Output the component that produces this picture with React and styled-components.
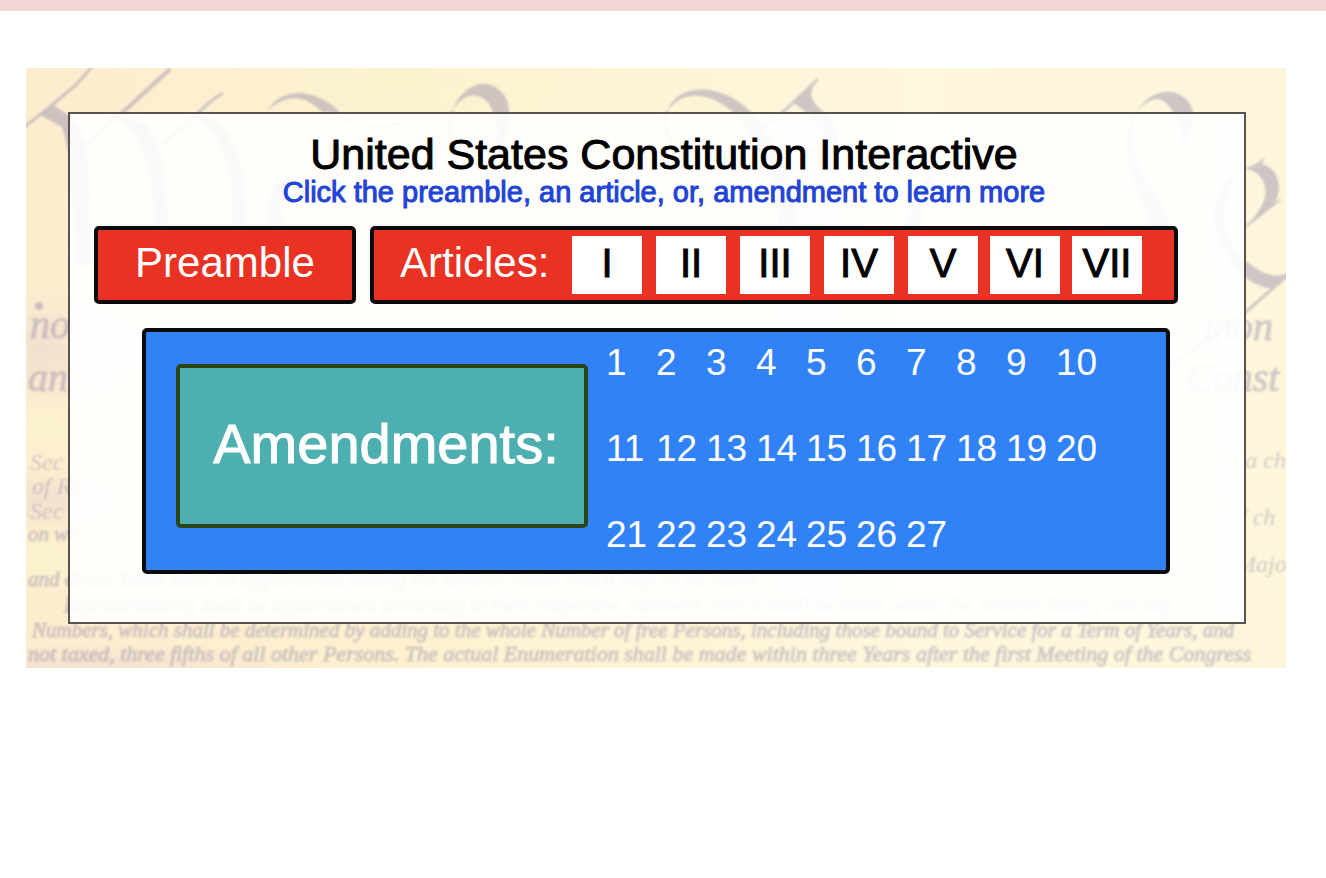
import React from "react";
import styled, { createGlobalStyle } from "styled-components";

const red = "#e93223";
const blue = "#3282f7";
const teal = "#4eafb0";
const ink = "#8a7fa6";

const articles = ["I", "II", "III", "IV", "V", "VI", "VII"];
const amendments = Array.from({ length: 27 }, (_, i) => i + 1);

const GlobalStyle = createGlobalStyle`
  * {
    box-sizing: border-box;
  }

  body {
    margin: 0;
    background: #fff;
    font-family: "Liberation Sans", Arial, sans-serif;
  }
`;

const TopBar = styled.div`
  height: 11px;
  background: #f4d6d8;
`;

const Stage = styled.main`
  position: relative;
  margin: 57px 40px 0 26px;
  padding: 44px 40px 44px 42px;
  overflow: hidden;
  background: #fdf2d0;
`;

const Parchment = styled.svg`
  position: absolute;
  top: 0;
  left: 0;
  width: 100%;
  height: 100%;

  text {
    font-family: "Liberation Serif", "Times New Roman", serif;
    font-style: italic;
  }
`;

const Panel = styled.div`
  position: relative;
  padding: 18px 66px 48px 24px;
  border: 2px solid #57534d;
  background: rgba(255, 255, 255, 0.9);
  background-clip: padding-box;
`;

const Header = styled.header`
  margin-right: -42px;
  padding-left: 14px;
  text-align: center;
`;

const Title = styled.h1`
  margin: 0;
  font-size: 43px;
  font-weight: 400;
  line-height: 44px;
  color: #000;
  -webkit-text-stroke: 1px #000;
`;

const Subtitle = styled.p`
  margin: 0;
  font-size: 29px;
  line-height: 32px;
  color: #2143d6;
  -webkit-text-stroke: 1px #2143d6;
`;

const TopRow = styled.div`
  display: flex;
  gap: 14px;
  margin-top: 18px;
`;

const PlainButton = styled.button`
  margin: 0;
  padding: 0;
  border: 0;
  background: none;
  color: #fff;
  font-family: inherit;
  cursor: pointer;
`;

const PreambleButton = styled(PlainButton)`
  flex: 0 0 262px;
  height: 78px;
  padding-bottom: 4px;
  border: 4px solid #0a0a0a;
  border-radius: 5px;
  background: ${red};
  font-size: 42px;
`;

const Articles = styled.section`
  flex: 1;
  display: flex;
  align-items: center;
  height: 78px;
  padding-left: 26px;
  border: 4px solid #0a0a0a;
  border-radius: 5px;
  background: ${red};
`;

const ArticlesLabel = styled.h2`
  flex: 0 0 172px;
  margin: 0;
  padding-bottom: 4px;
  color: #fff;
  font-size: 42px;
  font-weight: 400;
`;

const ArticleGrid = styled.div`
  display: grid;
  grid-template-columns: repeat(4, 84px) repeat(3, 82px);
`;

const ArticleButton = styled(PlainButton)`
  width: 70px;
  height: 58px;
  padding-bottom: 4px;
  background: #fff;
  color: #000;
  font-size: 40px;
  -webkit-text-stroke: 1px #000;
`;

const Amendments = styled.section`
  display: flex;
  align-items: flex-start;
  gap: 18px;
  height: 246px;
  margin: 24px 8px 0 48px;
  padding-left: 30px;
  border: 4px solid #0a0a0a;
  border-radius: 5px;
  background: ${blue};
`;

const AmendmentsLabel = styled.h2`
  display: flex;
  align-items: center;
  justify-content: center;
  flex: 0 0 412px;
  height: 164px;
  margin: 32px 0 0;
  padding: 0 0 6px 8px;
  border: 4px solid #2b4517;
  border-radius: 5px;
  background: ${teal};
  color: #fff;
  font-size: 56px;
  font-weight: 400;
  -webkit-text-stroke: 1px #fff;
`;

const AmendmentGrid = styled.div`
  display: grid;
  grid-template-columns: repeat(10, 50px);
  row-gap: 42px;
  padding-top: 9px;
`;

const AmendmentButton = styled(PlainButton)`
  font-size: 37px;
  line-height: 44px;
  text-align: left;
`;

const ParchmentBackground = () => (
  <Parchment
    viewBox="26 68 1260 600"
    preserveAspectRatio="xMidYMid slice"
    aria-hidden="true"
  >
    <defs>
      <linearGradient id="paper" x1="0" y1="0" x2="1" y2="0">
        <stop offset="0" stopColor="#fcedcf" />
        <stop offset="0.3" stopColor="#fdf1d0" />
        <stop offset="0.7" stopColor="#fef7dc" />
        <stop offset="1" stopColor="#fdf6da" />
      </linearGradient>
      <radialGradient id="stain">
        <stop offset="0" stopColor="#f2e0cf" />
        <stop offset="1" stopColor="#f2e0cf" stopOpacity="0" />
      </radialGradient>
      <radialGradient id="light">
        <stop offset="0" stopColor="#fcf3cd" />
        <stop offset="1" stopColor="#fcf3cd" stopOpacity="0" />
      </radialGradient>
      <filter id="soft">
        <feGaussianBlur stdDeviation="0.8" />
      </filter>
    </defs>
    <rect x="26" y="68" width="1260" height="600" fill="url(#paper)" />
    <ellipse cx="40" cy="350" rx="120" ry="60" fill="url(#stain)" />
    <ellipse cx="50" cy="670" rx="300" ry="28" fill="url(#stain)" />
    <ellipse cx="40" cy="500" rx="90" ry="30" fill="url(#stain)" />
    <ellipse cx="400" cy="80" rx="180" ry="50" fill="url(#light)" />
    <ellipse cx="45" cy="430" rx="90" ry="30" fill="url(#light)" />
    <ellipse cx="45" cy="560" rx="90" ry="35" fill="url(#light)" />

    {/* large flourishes */}
    <g filter="url(#soft)" opacity="0.4">
      <g fill="none" stroke={ink} strokeWidth="3" strokeLinecap="round">
        <path d="M22 129 L52 105 L76 85 L91 68" />
        <path d="M169 70 L122 113 L85 146" strokeWidth="4" />
        <path d="M222 94 C212 99 206 105 199 112 L162 145" />
        <path d="M330 110 C348 124 372 132 404 122" strokeWidth="2" />
        <path d="M452 112 C446 132 450 148 464 160" />
        <path d="M667 112 C662 134 672 152 690 156" />
        <path d="M817 80 L782 113 L700 180" />
        <path d="M1046 135 L1000 172" strokeWidth="2" />
        <path d="M1093 153 L1050 190" strokeWidth="2" />
        <path d="M1180 146 L1154 168" strokeWidth="2" />
        <path d="M1290 273 L1246 312 L1165 370" />
        <path d="M1280 200 L1246 226 L1180 280" strokeWidth="2" />
      </g>
      <g fill={ink}>
        <path d="M40 115 L52 104 L68 115 C82 122 88 146 89 180 L91 265 L76 265 L72 200 C71 160 66 140 62 127 Z" />
        <path d="M118 118 C142 112 160 135 163 165 L169 226 L154 226 C152 180 150 145 118 118 Z" />
        <path d="M192 116 C225 112 248 150 247 226 L232 226 C234 170 224 134 192 116 Z" />
        <path d="M267 111 C284 84 317 90 340 112 L322 112 C306 96 288 92 267 111 Z" />
        <path d="M452 112 C462 82 492 74 506 98 C514 120 508 146 492 165 C498 142 499 126 493 112 C486 92 465 88 452 112 Z" />
        <path d="M280 180 C265 195 265 214 272 226 L285 226 C279 211 278 196 292 178 Z" />
        <path d="M667 112 C676 82 722 82 751 112 C785 150 796 190 798 226 L778 226 C778 185 760 143 733 112 C708 91 681 90 667 112 Z" />
        <path d="M793 103 L818 80 C804 94 815 105 825 113 C840 128 842 144 830 165 C829 136 817 118 793 103 Z" />
        <path d="M1137 112 C1152 84 1187 86 1193 112 C1194 126 1189 138 1180 146 C1184 130 1182 120 1173 112 C1163 94 1150 96 1137 112 Z" />
        <path d="M1137 112 C1112 150 1138 180 1150 226 L1170 226 C1162 190 1118 160 1137 112 Z" />
        <path d="M908 226 C908 200 920 180 938 172 C923 190 918 208 922 226 Z" />
        <path d="M1244 169 L1256 164 L1265 157 L1262 164 C1277 168 1282 183 1277 199 C1268 212 1256 220 1246 227 C1258 213 1268 200 1265 187 C1262 174 1253 169 1244 169 Z" />
        <path d="M1238 172 C1205 192 1204 238 1246 278 C1258 287 1266 288 1272 288 L1290 272 C1276 280 1262 274 1246 261 C1220 238 1218 206 1238 172 Z" />
      </g>
      <circle cx="39" cy="306" r="4" fill={ink} />
    </g>

    {/* handwritten lines */}
    <g filter="url(#soft)" fill={ink} stroke={ink} opacity="0.38">
      <g fontSize="40">
        <text x="30" y="338">no</text>
        <text x="28" y="391">an</text>
        <text x="1204" y="340">mon</text>
        <text x="1186" y="391">Const</text>
      </g>
      <g fontSize="24" strokeWidth="0">
        <text x="30" y="470">Sec</text>
        <text x="32" y="494">of Re</text>
        <text x="30" y="519">Sec</text>
        <text x="1204" y="468">y of a ch</text>
        <text x="1240" y="525">f ch</text>
        <text x="1236" y="572">Major</text>
      </g>
      <g fontSize="21">
        <text x="28" y="541">on wh</text>
        <text x="28" y="586">
          and direct Taxes shall be apportioned among the several States which may
          be included
        </text>
        <text x="64" y="612">
          Representatives shall be apportioned according to their respective
          Numbers, which shall be made within the several States, and any
        </text>
        <text x="32" y="637">
          Numbers, which shall be determined by adding to the whole Number of free
          Persons, including those bound to Service for a Term of Years, and
        </text>
        <text x="28" y="661" fontSize="22">
          not taxed, three fifths of all other Persons. The actual Enumeration
          shall be made within three Years after the first Meeting of the Congress
        </text>
      </g>
    </g>
  </Parchment>
);

const App = () => {
  return (
    <>
      <GlobalStyle />
      <TopBar />
      <Stage>
        <ParchmentBackground />
        <Panel>
          <Header>
            <Title>United States Constitution Interactive</Title>
            <Subtitle>
              Click the preamble, an article, or, amendment to learn more
            </Subtitle>
          </Header>
          <TopRow>
            <PreambleButton type="button">Preamble</PreambleButton>
            <Articles>
              <ArticlesLabel>Articles:</ArticlesLabel>
              <ArticleGrid>
                {articles.map((article) => (
                  <ArticleButton type="button" key={article}>
                    {article}
                  </ArticleButton>
                ))}
              </ArticleGrid>
            </Articles>
          </TopRow>
          <Amendments>
            <AmendmentsLabel>Amendments:</AmendmentsLabel>
            <AmendmentGrid>
              {amendments.map((amendment) => (
                <AmendmentButton type="button" key={amendment}>
                  {amendment}
                </AmendmentButton>
              ))}
            </AmendmentGrid>
          </Amendments>
        </Panel>
      </Stage>
    </>
  );
};

export default App;
